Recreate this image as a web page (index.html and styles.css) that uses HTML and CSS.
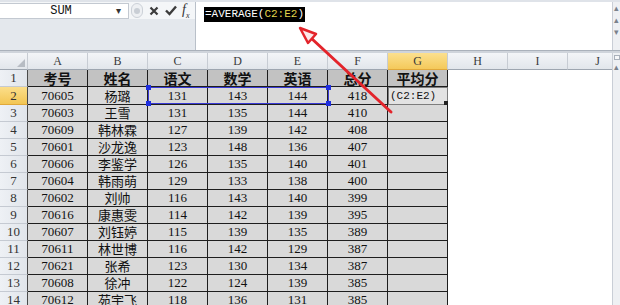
FILE: index.html
```html
<!DOCTYPE html>
<html lang="zh-CN">
    <head>
        <meta charset="utf-8">
        <title>平均分 - Excel</title>
        <link rel="stylesheet" href="styles.css">
    </head>
    <body>
        <div class="app">
            <div class="formula-bar">
                <div class="fb-left">
                    <div class="namebar">
                        <div class="namebox">
                            <span class="name">SUM</span>
                            <span class="dd">&#9662;</span>
                        </div>
                        <span class="knob"><span></span></span>
                        <svg class="btn" width="10" height="10" viewBox="0 0 10 10"><path d="M1.5 1.5 L8.5 8.5 M8.5 1.5 L1.5 8.5" stroke="#3c3c3c" stroke-width="2.2" fill="none"/></svg>
                        <svg class="btn" width="12" height="11" viewBox="0 0 12 11"><path d="M1 5.5 L4.5 9 L11 1.5" stroke="#3c3c3c" stroke-width="2.4" fill="none"/></svg>
                        <span class="fx">f<sub>x</sub></span>
                    </div>
                </div>
                <div class="formula">
                    <span class="sel">=AVERAGE(<span class="ref">C2:E2</span>)</span>
                </div>
                <div class="vscroll">
                    <span class="arr">&#9652;</span>
                    <span class="arr">&#9652;</span>
                    <span class="arr">&#9662;</span>
                </div>
            </div>
            <div class="split"></div>
            <div class="sheet-row">
                <div class="sheet-wrap">
                    <table class="sheet">
                        <colgroup>
                            <col class="c-rh">
                            <col><col><col><col><col><col><col><col><col><col>
                        </colgroup>
                        <tr class="cols">
                            <th class="corner"><svg width="8" height="8" viewBox="0 0 8 8"><path d="M8 0 L8 8 L0 8 Z" fill="#b7bcc3"/></svg></th>
                            <th>A</th><th>B</th><th>C</th><th>D</th><th>E</th><th>F</th><th class="hl">G</th><th>H</th><th>I</th><th>J</th>
                        </tr>
                        <tr class="head">
                            <th class="rh">1</th>
                            <td>考号</td><td>姓名</td><td>语文</td><td>数学</td><td>英语</td><td>总分</td><td>平均分</td>
                            <td class="e"></td><td class="e"></td><td class="e"></td>
                        </tr>
                        <tr>
                            <th class="rh hl">2</th>
                            <td>70605</td><td class="cn">杨璐</td><td>131</td><td>143</td><td>144</td><td>418</td><td class="active">(C2:E2)</td>
                            <td class="e"></td><td class="e"></td><td class="e"></td>
                        </tr>
                        <tr>
                            <th class="rh">3</th>
                            <td>70603</td><td class="cn">王雪</td><td>131</td><td>135</td><td>144</td><td>410</td><td></td>
                            <td class="e"></td><td class="e"></td><td class="e"></td>
                        </tr>
                        <tr>
                            <th class="rh">4</th>
                            <td>70609</td><td class="cn">韩林霖</td><td>127</td><td>139</td><td>142</td><td>408</td><td></td>
                            <td class="e"></td><td class="e"></td><td class="e"></td>
                        </tr>
                        <tr>
                            <th class="rh">5</th>
                            <td>70601</td><td class="cn">沙龙逸</td><td>123</td><td>148</td><td>136</td><td>407</td><td></td>
                            <td class="e"></td><td class="e"></td><td class="e"></td>
                        </tr>
                        <tr>
                            <th class="rh">6</th>
                            <td>70606</td><td class="cn">李鉴学</td><td>126</td><td>135</td><td>140</td><td>401</td><td></td>
                            <td class="e"></td><td class="e"></td><td class="e"></td>
                        </tr>
                        <tr>
                            <th class="rh">7</th>
                            <td>70604</td><td class="cn">韩雨萌</td><td>129</td><td>133</td><td>138</td><td>400</td><td></td>
                            <td class="e"></td><td class="e"></td><td class="e"></td>
                        </tr>
                        <tr>
                            <th class="rh">8</th>
                            <td>70602</td><td class="cn">刘帅</td><td>116</td><td>143</td><td>140</td><td>399</td><td></td>
                            <td class="e"></td><td class="e"></td><td class="e"></td>
                        </tr>
                        <tr>
                            <th class="rh">9</th>
                            <td>70616</td><td class="cn">康惠雯</td><td>114</td><td>142</td><td>139</td><td>395</td><td></td>
                            <td class="e"></td><td class="e"></td><td class="e"></td>
                        </tr>
                        <tr>
                            <th class="rh">10</th>
                            <td>70607</td><td class="cn">刘钰婷</td><td>115</td><td>139</td><td>135</td><td>389</td><td></td>
                            <td class="e"></td><td class="e"></td><td class="e"></td>
                        </tr>
                        <tr>
                            <th class="rh">11</th>
                            <td>70611</td><td class="cn">林世博</td><td>116</td><td>142</td><td>129</td><td>387</td><td></td>
                            <td class="e"></td><td class="e"></td><td class="e"></td>
                        </tr>
                        <tr>
                            <th class="rh">12</th>
                            <td>70621</td><td class="cn">张希</td><td>123</td><td>130</td><td>134</td><td>387</td><td></td>
                            <td class="e"></td><td class="e"></td><td class="e"></td>
                        </tr>
                        <tr>
                            <th class="rh">13</th>
                            <td>70608</td><td class="cn">徐冲</td><td>122</td><td>124</td><td>139</td><td>385</td><td></td>
                            <td class="e"></td><td class="e"></td><td class="e"></td>
                        </tr>
                        <tr>
                            <th class="rh">14</th>
                            <td>70612</td><td class="cn">苑宇飞</td><td>118</td><td>136</td><td>131</td><td>385</td><td></td>
                            <td class="e"></td><td class="e"></td><td class="e"></td>
                        </tr>
                    </table>
                </div>
                <div class="vscroll sheet-scroll">
                    <span class="grip"></span>
                    <span class="arr">&#9652;</span>
                </div>
            </div>

            <!-- range being referenced by the formula -->
            <div class="range">
                <span class="hd tl"></span><span class="hd bl"></span>
                <span class="hd tr"></span><span class="hd br"></span>
            </div>

            <svg class="arrow" width="620" height="305" viewBox="0 0 620 305">
                <line x1="391" y1="112" x2="311" y2="38" stroke="#e3242b" stroke-width="3" stroke-linecap="round"/>
                <polygon points="300,28 316,34 308,43" fill="#fbe9ea" stroke="#e3242b" stroke-width="2.5" stroke-linejoin="round"/>
            </svg>
        </div>
    </body>
</html>
```

FILE: styles.css
```css
* {
    box-sizing: border-box;
}

body {
    margin: 0;
    width: 620px;
    height: 305px;
    overflow: hidden;
    background: #fff;
    font-family: "Liberation Serif", serif;
    color: #111;
}

.app {
    position: relative;
}

/* formula bar */

.formula-bar {
    display: flex;
    height: 50px;
    border-top: 2px solid #dfe3e9;
}

.fb-left {
    width: 196px;
    background: #e4e8ed;
    border-right: 1px solid #b9c0c9;
}

.namebar {
    display: flex;
    align-items: center;
    height: 17px;
    background: #f4f6f8;
}

.namebox {
    display: flex;
    align-items: center;
    width: 129px;
    height: 16px;
    background: #fff;
    border: 1px solid #c3c9d1;
    border-left: none;
}

.name {
    flex: 1;
    text-align: center;
    font-family: "Liberation Mono", monospace;
    font-size: 12px;
    padding-left: 6px;
}

.dd {
    width: 12px;
    font-size: 10px;
    color: #333;
}

.knob {
    display: flex;
    align-items: center;
    justify-content: center;
    width: 12px;
    height: 15px;
    margin-left: 2px;
    border: 1px solid #ccd1d8;
    border-radius: 7px;
    background: #eef0f3;
}

.knob span {
    width: 6px;
    height: 6px;
    border-radius: 50%;
    background: #c9ced5;
}

.btn {
    margin-left: 6px;
}

.fx {
    margin-left: 5px;
    font-family: "Liberation Serif", serif;
    font-style: italic;
    font-size: 14px;
    color: #333;
}

.fx sub {
    font-size: 8px;
}

.formula {
    flex: 1;
    background: #fff;
    padding: 1px 0 0 8px;
}

.sel {
    display: inline-block;
    background: #000;
    color: #fff;
    font-family: "Liberation Mono", monospace;
    font-size: 11px;
    line-height: 15px;
    padding: 0 1px;
}

.ref {
    color: #e2d44c;
}

.vscroll {
    display: flex;
    flex-direction: column;
    align-items: center;
    width: 8px;
    background: #eef0f3;
    border-left: 1px solid #c9ced6;
}

.arr {
    font-size: 9px;
    line-height: 12px;
    color: #7b828c;
}

.split {
    height: 3px;
    background: #cfd4db;
    border-top: 1px solid #aab1bb;
}

/* sheet */

.sheet-row {
    display: flex;
}

.sheet-wrap {
    width: 612px;
    overflow: hidden;
}

.sheet {
    table-layout: fixed;
    width: 628px;
    border-collapse: separate;
    border-spacing: 0;
}

.sheet col {
    width: 60px;
}

.sheet col.c-rh {
    width: 28px;
}

.sheet tr {
    height: 17px;
}

.sheet th,
.sheet td {
    padding: 0;
    height: 17px;
    text-align: center;
    font-size: 13px;
    line-height: 16px;
    white-space: nowrap;
}

.cols th {
    font-weight: normal;
    font-size: 12px;
    color: #3a3a3a;
    background: linear-gradient(#f3f5f8, #e2e6eb);
    border-right: 1px solid #c7ccd3;
    border-bottom: 1px solid #9ea6b0;
}

.cols th.hl {
    background: linear-gradient(#fbe08f, #f4c95a);
    border-bottom-color: #e0a83a;
}

.corner {
    text-align: right !important;
    vertical-align: bottom;
}

.corner svg {
    display: block;
    margin: 0 2px 2px auto;
}

.rh {
    font-weight: normal;
    color: #333;
    background: linear-gradient(90deg, #eef1f5, #e1e5eb);
    border-right: 1px solid #4a4a4a;
    border-bottom: 1px solid #c5cad2;
}

.rh.hl {
    background: linear-gradient(#fbde8a, #f3c654);
    border-bottom-color: #e0a83a;
}

.sheet td {
    background: #d9d9d9;
    border-right: 1px solid #1e1e1e;
    border-bottom: 1px solid #1e1e1e;
}

.sheet td.e {
    background: #fff;
    border: none;
}

.head td {
    background: #c2c2c2;
    font-family: "Noto Sans CJK SC", sans-serif;
    font-weight: bold;
    font-size: 14px;
    line-height: 16px;
}

.head td.e {
    background: #fff;
}

.cn {
    font-family: "Noto Sans CJK SC", sans-serif;
    font-size: 13px;
    line-height: 16px;
}

.sheet td.active {
    position: relative;
    text-align: left;
    background: #e3e3e3;
    border: 1px solid #7d7d7d;
    font-family: "Liberation Mono", monospace;
    font-size: 11px;
    padding-left: 1px;
}

.sheet td.active::after {
    content: "";
    position: absolute;
    right: -1px;
    bottom: -1px;
    width: 4px;
    height: 4px;
    background: #222;
}

.sheet-scroll {
    width: 8px;
    height: 252px;
}

.grip {
    width: 6px;
    height: 5px;
    margin: 2px 0 1px;
    border: 1px solid #aab1bb;
    background: #f6f7f9;
}

/* overlays */

.range {
    position: absolute;
    left: 148px;
    top: 87px;
    width: 181px;
    height: 17px;
    border: 1px solid #3a3ad6;
}

.hd {
    position: absolute;
    width: 5px;
    height: 5px;
    background: #1f2fe0;
}

.hd.tl { left: -3px; top: -3px; }
.hd.bl { left: -3px; bottom: -3px; }
.hd.tr { right: -3px; top: -3px; }
.hd.br { right: -3px; bottom: -3px; }

.arrow {
    position: absolute;
    left: 0;
    top: 0;
    pointer-events: none;
}
```
